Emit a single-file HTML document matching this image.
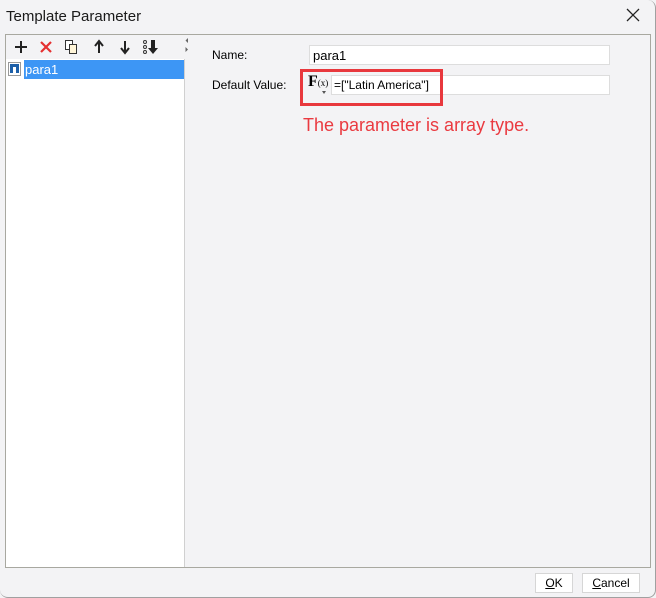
<!DOCTYPE html>
<html><head><style>
*{margin:0;padding:0;box-sizing:border-box}
body{width:656px;height:598px;background:#f3f3f5;font-family:"Liberation Sans",sans-serif;position:relative;overflow:hidden}
.a{position:absolute}
.t{font-size:12px;color:#000}
</style></head><body>
<div class="a" style="left:0;top:0;width:656px;height:598px;border-right:1px solid #a0a0a0;border-bottom:1px solid #a0a0a0;border-radius:0 8px 8px 8px"></div>
<div class="a" style="left:6px;top:8px;font-size:15px;color:#1a1a1a">Template Parameter</div>
<svg class="a" style="left:626px;top:8px" width="14" height="14"><path d="M1 1L13 13M13 1L1 13" stroke="#222" stroke-width="1.3"/></svg>
<div class="a" style="left:5px;top:34px;width:646px;height:534px;border:1px solid #a8a8a0"></div>
<div class="a" style="left:6px;top:59px;width:179px;height:508px;background:#fff;border-right:1px solid #d0d0d0"></div>
<div class="a" style="left:24px;top:60px;width:160px;height:19px;background:#3d96f5"></div>
<div class="a" style="left:25px;top:62px;font-size:13px;color:#fff">para1</div>
<svg class="a" style="left:8px;top:62px" width="15" height="16"><rect x="0.5" y="0.5" width="12" height="13" fill="#fff" stroke="#999"/><rect x="2" y="2" width="9" height="9" fill="#1c5fa8"/><rect x="5" y="5" width="3" height="6" fill="#fff"/></svg>
<svg class="a" style="left:12px;top:38px" width="180" height="18">
<path d="M3 9H15M9 3V15" stroke="#222" stroke-width="2"/>
<path d="M29 4L39 14M39 4L29 14" stroke="#e53030" stroke-width="2.2"/>
<rect x="53.5" y="2.5" width="7" height="9" fill="#fff" stroke="#333"/><rect x="57.5" y="6.5" width="7" height="9" fill="#fff5d8" stroke="#333"/>
<path d="M87 15V4M83 8L87 3L91 8" stroke="#222" stroke-width="2" fill="none"/>
<path d="M113 3V14M109 10L113 15L117 10" stroke="#222" stroke-width="2" fill="none"/>
<circle cx="133" cy="4" r="1.5" fill="none" stroke="#333"/><circle cx="133" cy="9" r="1.5" fill="none" stroke="#333"/><circle cx="133" cy="14" r="1.5" fill="none" stroke="#333"/>
<path d="M141 2V11" stroke="#222" stroke-width="4"/><path d="M136 10H146L141 16Z" fill="#222"/>
<path d="M176 0L173.5 2.5L176 5Z M173.5 9L176 11.5L173.5 14Z" fill="#666"/>
</svg>
<div class="a t" style="left:212px;top:48px">Name:</div>
<div class="a" style="left:309px;top:45px;width:301px;height:20px;background:#fff;border:1px solid #ddd"></div>
<div class="a t" style="left:313px;top:48px;font-size:13px">para1</div>
<div class="a t" style="left:212px;top:78px">Default Value:</div>
<div class="a" style="left:308px;top:73px;font-family:'Liberation Serif',serif;font-size:16px;font-weight:bold">F<span style="font-size:9px;font-weight:normal">(x)</span></div>
<div class="a" style="left:322px;top:91px;width:0;height:0;border-left:2px solid transparent;border-right:2px solid transparent;border-top:3px solid #555"></div>
<div class="a" style="left:331px;top:75px;width:279px;height:20px;background:#fff;border:1px solid #ddd"></div>
<div class="a t" style="left:334px;top:78px;font-size:12px">=["Latin America"]</div>
<div class="a" style="left:300px;top:69px;width:143px;height:37px;border:3px solid #e8383d"></div>
<div class="a" style="left:303px;top:115px;font-size:18px;color:#ea3a40">The parameter is array type.</div>
<div class="a" style="left:535px;top:573px;width:38px;height:20px;background:#fff;border:1px solid #d6d6d6;font-size:12px;text-align:center;line-height:18px"><u>O</u>K</div>
<div class="a" style="left:582px;top:573px;width:58px;height:20px;background:#fff;border:1px solid #d6d6d6;font-size:12px;text-align:center;line-height:18px"><u>C</u>ancel</div>
</body></html>
